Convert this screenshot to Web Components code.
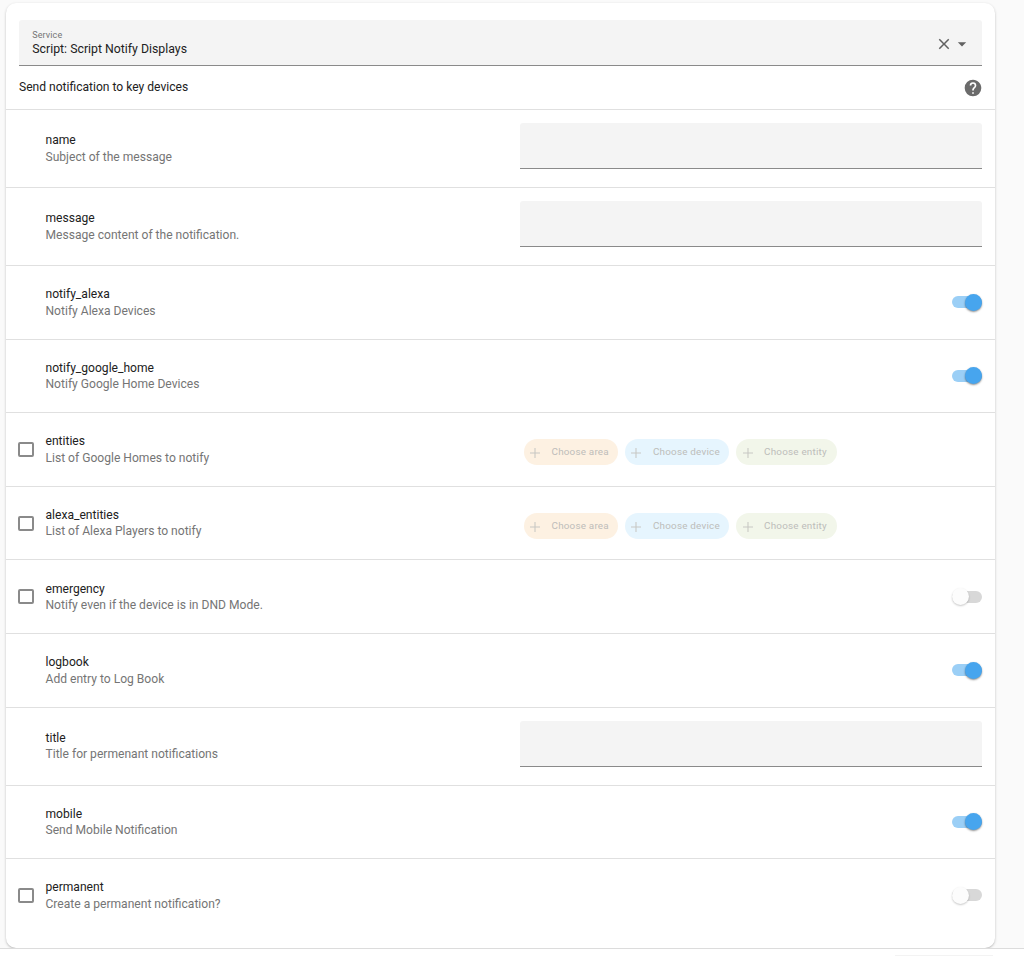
<!DOCTYPE html>
<html lang="en">
<head>
<meta charset="utf-8">
<title>Services</title>
<style>
  body {
    margin: 0;
    height: 956px;
    overflow: hidden;
    display: flex;
    flex-direction: column;
    background: #fafafa;
    color: #212121;
    font-family: Roboto, "Liberation Sans", sans-serif;
    font-size: 12.08px;
    line-height: 16.4px;
    --divider: #e0e0e0;
    --secondary: #757575;
    --field: #f4f4f4;
    --primary: #47a5ee;
  }
</style>
</head>
<body>
<service-card>
  <service-picker slot="picker" label="Service">Script: Script Notify Displays</service-picker>
  <span slot="description">Send notification to key devices</span>
  <settings-row tall><span slot="heading">name</span><span slot="description">Subject of the message</span><text-field></text-field></settings-row>
  <settings-row tall><span slot="heading">message</span><span slot="description">Message content of the notification.</span><text-field></text-field></settings-row>
  <settings-row><span slot="heading">notify_alexa</span><span slot="description">Notify Alexa Devices</span><toggle-switch checked></toggle-switch></settings-row>
  <settings-row><span slot="heading">notify_google_home</span><span slot="description">Notify Google Home Devices</span><toggle-switch checked></toggle-switch></settings-row>
  <settings-row optional><span slot="heading">entities</span><span slot="description">List of Google Homes to notify</span><target-picker></target-picker></settings-row>
  <settings-row optional><span slot="heading">alexa_entities</span><span slot="description">List of Alexa Players to notify</span><target-picker></target-picker></settings-row>
  <settings-row optional><span slot="heading">emergency</span><span slot="description">Notify even if the device is in DND Mode.</span><toggle-switch></toggle-switch></settings-row>
  <settings-row><span slot="heading">logbook</span><span slot="description">Add entry to Log Book</span><toggle-switch checked></toggle-switch></settings-row>
  <settings-row tall><span slot="heading">title</span><span slot="description">Title for permenant notifications</span><text-field></text-field></settings-row>
  <settings-row><span slot="heading">mobile</span><span slot="description">Send Mobile Notification</span><toggle-switch checked></toggle-switch></settings-row>
  <settings-row optional><span slot="heading">permanent</span><span slot="description">Create a permanent notification?</span><toggle-switch></toggle-switch></settings-row>
</service-card>
<action-bar></action-bar>

<script>
class ServiceCard extends HTMLElement {
  constructor() {
    super();
    this.attachShadow({ mode: 'open' });

    this.shadowRoot.innerHTML = `
      <style>
        :host {
          display: block;
          flex: none;
          box-sizing: border-box;
          width: 989px;
          height: 945px;
          margin: 3px 0 0 6px;
          padding-top: 17px;
          background: #fff;
          border-radius: 10px;
          box-shadow: 0 1px 3px rgba(0, 0, 0, 0.2), 0 1px 1px rgba(0, 0, 0, 0.08);
        }

        .description {
          display: flex;
          align-items: center;
          justify-content: space-between;
          height: 43px;
          padding: 0 13px;
        }

        svg {
          display: block;
          width: 20px;
          height: 20px;
          margin: 1px -1px 0 0;
          fill: #6b6b6b;
        }
      </style>
      <slot name="picker"></slot>
      <div class="description">
        <slot name="description"></slot>
        <svg viewBox="0 0 24 24"><path d="M15.07,11.25L14.17,12.17C13.45,12.89 13,13.5 13,15H11V14.5C11,13.39 11.45,12.39 12.17,11.67L13.41,10.41C13.78,10.05 14,9.55 14,9C14,7.89 13.1,7 12,7A2,2 0 0,0 10,9H8A4,4 0 0,1 12,5A4,4 0 0,1 16,9C16,9.88 15.64,10.67 15.07,11.25M13,19H11V17H13M12,2A10,10 0 0,0 2,12A10,10 0 0,0 12,22A10,10 0 0,0 22,12C22,6.47 17.5,2 12,2Z"/></svg>
      </div>
      <slot></slot>
    `;
  }
}

class ServicePicker extends HTMLElement {
  constructor() {
    super();
    this.attachShadow({ mode: 'open' });

    this.shadowRoot.innerHTML = `
      <style>
        :host {
          display: flex;
          align-items: center;
          box-sizing: border-box;
          height: 46px;
          margin: 0 13px;
          padding: 2px 13px 0 13.3px;
          background: var(--field);
          border-bottom: 1px solid #8a8a8a;
          border-radius: 3px 3px 0 0;
        }

        .text {
          flex: 1;
        }

        #label {
          margin-top: -1px;
          font-size: 9px;
          line-height: 12px;
          letter-spacing: 0.1px;
          color: var(--secondary);
        }

        .value {
          font-size: 12.3px;
          line-height: 16px;
        }

        svg {
          display: block;
          width: 18px;
          height: 18px;
          fill: #616161;
        }

        .arrow {
          width: 20px;
          height: 20px;
          margin: 0 -3px 0 -1px;
        }
      </style>
      <div class="text">
        <div id="label"></div>
        <div class="value"><slot></slot></div>
      </div>
      <svg viewBox="0 0 24 24"><path d="M19,6.41L17.59,5L12,10.59L6.41,5L5,6.41L10.59,12L5,17.59L6.41,19L12,13.41L17.59,19L19,17.59L13.41,12L19,6.41Z"/></svg>
      <svg class="arrow" viewBox="0 0 24 24"><path d="M7,10L12,15L17,10H7Z"/></svg>
    `;
  }

  connectedCallback() {
    this.shadowRoot.getElementById('label').textContent = this.getAttribute('label');
  }
}

class SettingsRow extends HTMLElement {
  constructor() {
    super();
    this.attachShadow({ mode: 'open' });

    this.shadowRoot.innerHTML = `
      <style>
        :host {
          display: grid;
          grid-template-columns: 26.5px 1fr 462px;
          align-items: center;
          box-sizing: border-box;
          height: 73.6px;
          padding: 0 13px;
          border-top: 1px solid var(--divider);
        }

        :host([tall]) {
          height: 78px;
        }

        .box {
          display: none;
          box-sizing: border-box;
          width: 16px;
          height: 15px;
          margin-left: -1px;
          border: 2px solid #8a8a8a;
          border-radius: 2px;
        }

        :host([optional]) .box {
          display: block;
        }

        .text {
          grid-column: 2;
          display: flex;
          flex-direction: column;
          padding-top: 0.6px;
        }

        :host([tall]) .text {
          padding-top: 0;
        }

        .secondary {
          color: var(--secondary);
        }

        .control {
          display: flex;
          justify-content: flex-end;
        }

        :host([tall]) .control {
          padding-bottom: 5px;
        }
      </style>
      <div class="box"></div>
      <div class="text">
        <slot name="heading"></slot>
        <div class="secondary"><slot name="description"></slot></div>
      </div>
      <div class="control"><slot></slot></div>
    `;
  }
}

class TextField extends HTMLElement {
  constructor() {
    super();
    this.attachShadow({ mode: 'open' });

    this.shadowRoot.innerHTML = `
      <style>
        :host {
          display: block;
          flex: 1;
          box-sizing: border-box;
          height: 46px;
          background: var(--field);
          border-bottom: 1px solid #8a8a8a;
          border-radius: 3px 3px 0 0;
        }
      </style>
    `;
  }
}

class ToggleSwitch extends HTMLElement {
  constructor() {
    super();
    this.attachShadow({ mode: 'open' });

    this.shadowRoot.innerHTML = `
      <style>
        :host {
          display: flex;
          align-items: center;
          width: 30px;
          height: 12px;
          border-radius: 6px;
          background: #d8d8d8;
        }

        .thumb {
          width: 17px;
          height: 17px;
          border-radius: 50%;
          background: #fcfcfc;
          box-shadow: 0 1px 2px rgba(0, 0, 0, 0.22);
        }

        :host([checked]) {
          justify-content: flex-end;
          background: #9bcff6;
        }

        :host([checked]) .thumb {
          background: var(--primary);
          box-shadow: 0 1px 2px rgba(0, 0, 0, 0.45);
        }
      </style>
      <div class="thumb"></div>
    `;
  }
}

class TargetPicker extends HTMLElement {
  constructor() {
    super();
    this.attachShadow({ mode: 'open' });

    this.shadowRoot.innerHTML = `
      <style>
        :host {
          display: flex;
          flex: 1;
          gap: 6.8px;
          padding: 6px 0 0 3.5px;
        }
      </style>
      <target-chip style="--chip: #fdf1e2; width: 94.7px">Choose area</target-chip>
      <target-chip style="--chip: #e6f5fe; width: 104.3px">Choose device</target-chip>
      <target-chip style="--chip: #f2f6ea; width: 100.5px">Choose entity</target-chip>
    `;
  }
}

class TargetChip extends HTMLElement {
  constructor() {
    super();
    this.attachShadow({ mode: 'open' });

    this.shadowRoot.innerHTML = `
      <style>
        :host {
          display: flex;
          align-items: center;
          box-sizing: border-box;
          height: 26px;
          padding-left: 3.5px;
          border-radius: 13px;
          background: var(--chip);
          color: #bdbdba;
          font-size: 9.9px;
          letter-spacing: 0.2px;
          white-space: nowrap;
        }

        svg {
          width: 16px;
          height: 16px;
          margin: 1px 8.5px 0 0;
          fill: #c8c8c4;
        }
      </style>
      <svg viewBox="0 0 24 24"><path d="M19.5,12.8H12.8V19.5H11.2V12.8H4.5V11.2H11.2V4.5H12.8V11.2H19.5V12.8Z"/></svg>
      <span><slot></slot></span>
    `;
  }
}

class ActionBar extends HTMLElement {
  constructor() {
    super();
    this.attachShadow({ mode: 'open' });

    this.shadowRoot.innerHTML = `
      <style>
        :host {
          display: flex;
          flex: 1;
          justify-content: flex-end;
          align-items: flex-end;
          position: relative;
          background: #fff;
          border-top: 1px solid #dcdcdc;
        }

        .button {
          width: 98px;
          height: 1px;
          margin-right: 31px;
          background: #f3f3f3;
        }
      </style>
      <div class="button"></div>
    `;
  }
}

window.customElements.define('service-card', ServiceCard);
window.customElements.define('service-picker', ServicePicker);
window.customElements.define('settings-row', SettingsRow);
window.customElements.define('text-field', TextField);
window.customElements.define('toggle-switch', ToggleSwitch);
window.customElements.define('target-picker', TargetPicker);
window.customElements.define('target-chip', TargetChip);
window.customElements.define('action-bar', ActionBar);
</script>
</body>
</html>
